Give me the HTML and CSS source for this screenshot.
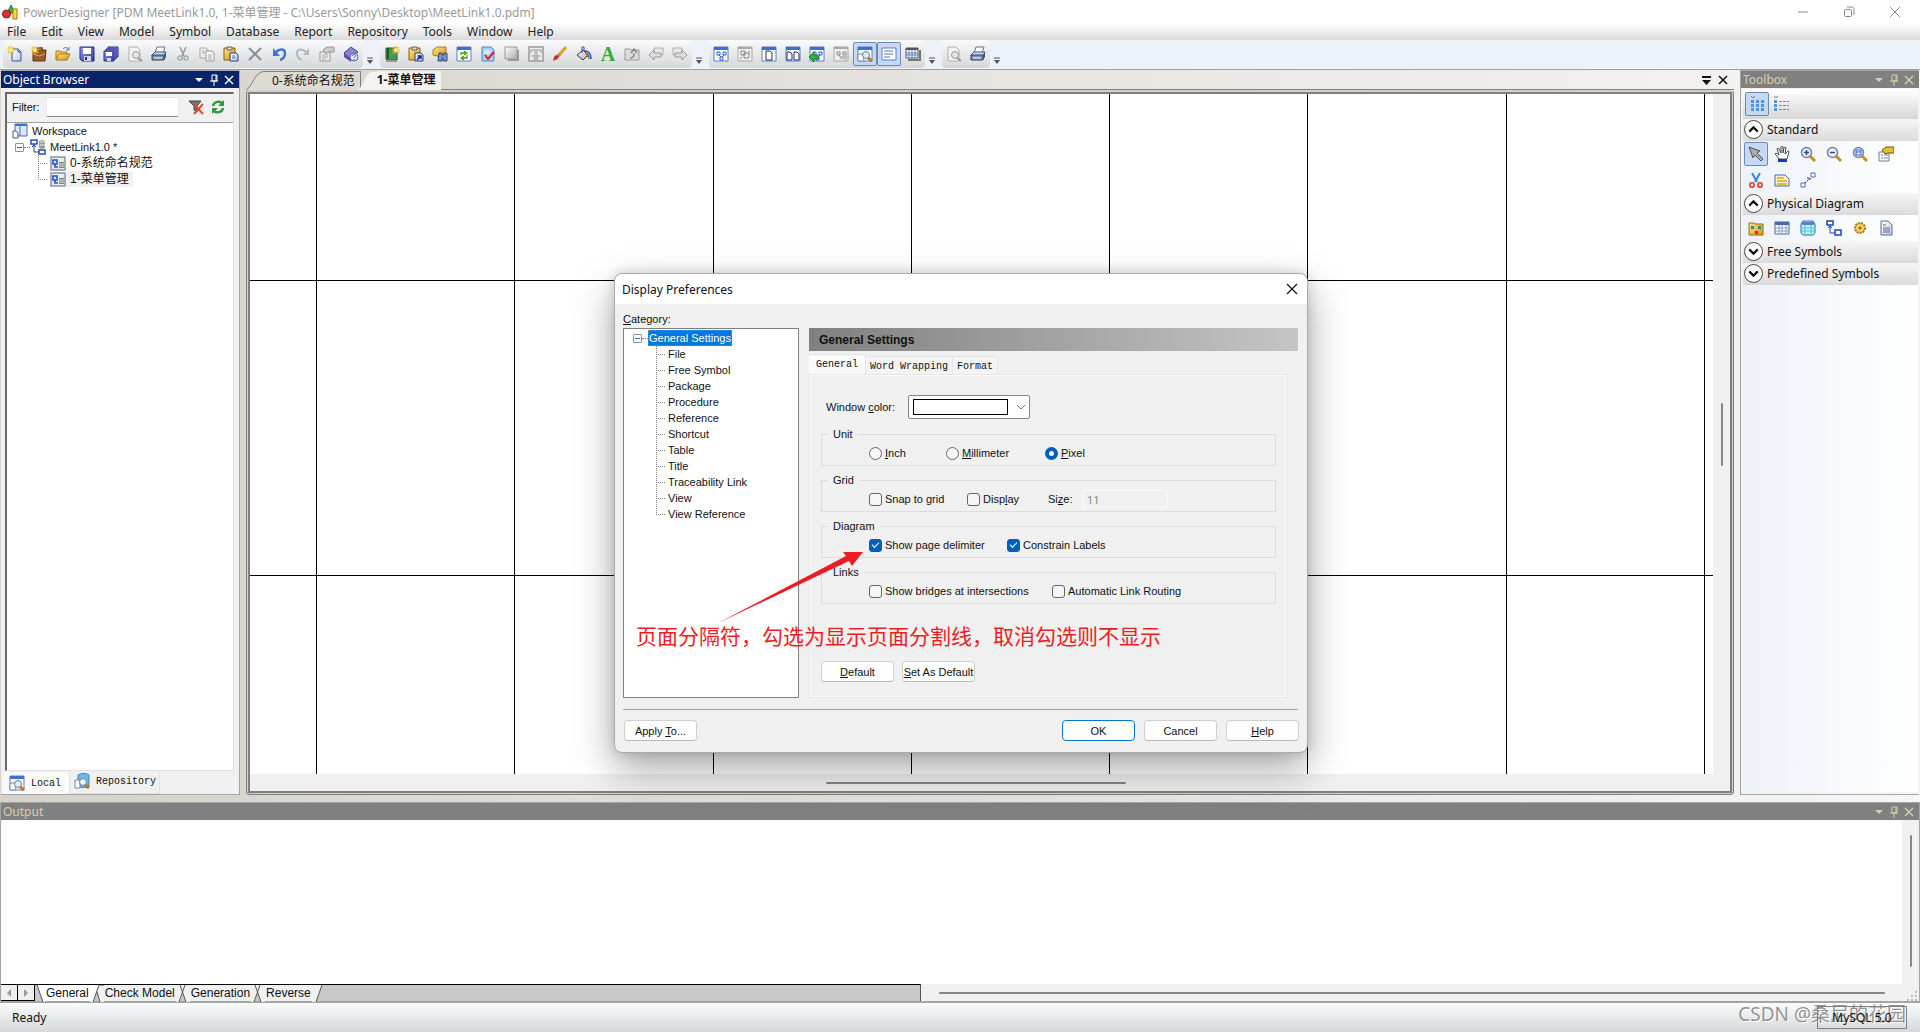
FILE: index.html
```html
<!DOCTYPE html>
<html lang="zh">
<head>
    <meta charset="utf-8">
    <meta name="viewport" content="width=device-width, initial-scale=1.0">
    <title>PowerDesigner</title>
    <link rel="stylesheet" href="styles.css">
</head>
<body>

<!-- icon sprite -->
<svg class="sprite" aria-hidden="true">
    <defs>
        <linearGradient id="g-page" x1="0" y1="0" x2="1" y2="1"><stop offset="0" stop-color="#fff"/><stop offset="1" stop-color="#b9cdec"/></linearGradient>
        <linearGradient id="g-gray" x1="0" y1="0" x2="1" y2="1"><stop offset="0" stop-color="#fff"/><stop offset="1" stop-color="#aaa"/></linearGradient>
        <linearGradient id="g-gold" x1="0" y1="0" x2="1" y2="1"><stop offset="0" stop-color="#ffe88a"/><stop offset="1" stop-color="#d8920c"/></linearGradient>
        <linearGradient id="g-blue" x1="0" y1="0" x2="1" y2="1"><stop offset="0" stop-color="#9a9df0"/><stop offset="1" stop-color="#3034a0"/></linearGradient>
    </defs>
    <symbol id="logo" viewBox="0 0 16 16"><path d="M9 1l4 8H5z" fill="#35b045" stroke="#1c7a2b"/><circle cx="4.500" cy="10" r="4" fill="#e03131" stroke="#8d1515"/><rect x="11" y="5" width="4" height="10" fill="#ffd84a" stroke="#a37800"/></symbol>
    <symbol id="spark" viewBox="0 0 16 16"><path d="M4 0v8M0 4h8M1 1l6 6M7 1L1 7" stroke="#f0c020" stroke-width="1.200"/><circle cx="4" cy="4" r="1.800" fill="#fff3a0"/></symbol>
    <symbol id="new" viewBox="0 0 16 16"><path d="M5 3h6l3 3v9H5z" fill="url(#g-page)" stroke="#3c5686"/><path d="M11 3v3h3" fill="none" stroke="#3c5686"/><use href="#spark" width="16" height="16"/></symbol>
    <symbol id="case" viewBox="0 0 16 16"><path d="M6 4V2h5v2" fill="none" stroke="#6b3a17" stroke-width="1.500"/><path d="M2 4h13l-1 11H2z" fill="#9a5a2a" stroke="#5d3011"/><path d="M2 8l6 2 6-2" fill="none" stroke="#d6a070"/><use href="#spark" width="16" height="16"/></symbol>
    <symbol id="open" viewBox="0 0 16 16"><path d="M1 14V5h4l1 1h6v3" fill="#f6c84c" stroke="#a87910"/><path d="M1 14l3-6h11l-3 6z" fill="url(#g-gold)" stroke="#a87910"/><path d="M8 3c2-2 4-2 5 0m1-2v3h-3" fill="none" stroke="#4b6ea8"/></symbol>
    <symbol id="save" viewBox="0 0 16 16"><path d="M1 1h14v14H3l-2-2z" fill="url(#g-blue)" stroke="#292c87"/><path d="M4 2h8v6H4z" fill="#fff"/><path d="M5 10h7v5H5z" fill="#d6d9ee"/><path d="M6 11h2v3H6z" fill="#292c87"/></symbol>
    <symbol id="saveall" viewBox="0 0 16 16"><path d="M5 1h10v10H5z" fill="#8386dd" stroke="#292c87"/><path d="M3 3h10v10H3z" fill="#8386dd" stroke="#292c87"/><path d="M1 5h10v10H1z" fill="url(#g-blue)" stroke="#292c87"/><path d="M3 6h6v4H3z" fill="#fff"/><path d="M4 12h4v3H4z" fill="#d6d9ee"/></symbol>
    <symbol id="preview" viewBox="0 0 16 16"><path d="M2 1h8l3 3v11H2z" fill="#f3f3f3" stroke="#b0b0b0"/><circle cx="9" cy="9" r="3.500" fill="#e4e4e4" stroke="#999"/><path d="M11 12l4 3" stroke="#999" stroke-width="2"/></symbol>
    <symbol id="print" viewBox="0 0 16 16"><path d="M6 1h8l-2 6H4z" fill="#fff" stroke="#5c6f94"/><path d="M1 9l3-3h11l-2 4H1z" fill="#cdd7ea" stroke="#43567c"/><path d="M1 9h12v5H1z" fill="#7c90b5" stroke="#2f4066"/><path d="M13 9l2-3v5l-2 3z" fill="#43567c"/><path d="M3 12h8" stroke="#fff"/></symbol>
    <symbol id="cut" viewBox="0 0 16 16"><path d="M5 1l4 9M11 1L7 10" stroke="#999" stroke-width="1.500"/><circle cx="5" cy="12" r="2" fill="none" stroke="#aaa" stroke-width="1.500"/><circle cx="11" cy="12" r="2" fill="none" stroke="#aaa" stroke-width="1.500"/></symbol>
    <symbol id="copy" viewBox="0 0 16 16"><path d="M1 2h6l2 2v8H1z" fill="#eee" stroke="#aaa"/><path d="M7 5h6l2 2v8H7z" fill="#f5f5f5" stroke="#999"/><path d="M3 5h3M3 7h3M9 9h4M9 11h4M9 13h4" stroke="#aaa"/></symbol>
    <symbol id="paste" viewBox="0 0 16 16"><path d="M1 2h11v12H1z" fill="url(#g-gold)" stroke="#8b5c0c"/><path d="M4 1h5v3H4z" fill="#ddd" stroke="#666"/><path d="M7 7h6l2 2v6H7z" fill="url(#g-page)" stroke="#2b3f75"/><path d="M9 10h3M9 12h4" stroke="#5874b4"/></symbol>
    <symbol id="delete" viewBox="0 0 16 16"><path d="M2 2l12 12M14 2L2 14" stroke="#8e8e8e" stroke-width="2"/></symbol>
    <symbol id="undo" viewBox="0 0 16 16"><path d="M5 6c4-4 9-3 9 1 0 3-2 6-5 7" fill="none" stroke="#3e75cf" stroke-width="2.500"/><path d="M2 2v8h7z" fill="#3e75cf"/></symbol>
    <symbol id="redo" viewBox="0 0 16 16"><path d="M11 6C7 2 2 3 2 7c0 3 2 6 5 7" fill="none" stroke="#b8b8b8" stroke-width="2"/><path d="M14 2v7H8z" fill="#b8b8b8"/></symbol>
    <symbol id="props" viewBox="0 0 16 16"><path d="M1 6h10v9H1z" fill="#eee" stroke="#999"/><path d="M3 9h6M3 11h6M3 13h4" stroke="#aaa"/><path d="M4 4l4-3h7v5H9L7 8z" fill="#ccc" stroke="#999"/></symbol>
    <symbol id="book" viewBox="0 0 16 16"><path d="M2 2h11v12H3l-1-1z" fill="#4e9a51" stroke="#1e5a28"/><path d="M4 2v11" stroke="#1e5a28" stroke-width="2"/><path d="M2 15h11" stroke="#999" stroke-width="2"/><use href="#spark" x="8" y="0" width="16" height="16"/></symbol>
    <symbol id="pastelink" viewBox="0 0 16 16"><use href="#paste" width="16" height="16"/><path d="M9 14l4-4M10 10h3v3" stroke="#1525a0" stroke-width="1.500" fill="none"/></symbol>
    <symbol id="find" viewBox="0 0 16 16"><path d="M1 4l4-3h9v5l-5 5-8-2z" fill="url(#g-gold)" stroke="#ad7910"/><path d="M7 7h3v2h2V7h3v8h-4v-3h-1v3H6z" fill="#7c94ca" stroke="#33457e"/></symbol>
    <symbol id="win" viewBox="0 0 16 16"><path d="M1 1h14v14H1z" fill="#fff" stroke="#5a7fc8"/><path d="M1 1h14v3H1z" fill="#3e6fd0"/></symbol>
    <symbol id="refreshwin" viewBox="0 0 16 16"><use href="#win" width="16" height="16"/><path d="M5 9V7h5M8 5l3 2-3 2M11 9v3H6M8 10l-3 2 3 2" stroke="#4f9b19" fill="none" stroke-width="1.300"/></symbol>
    <symbol id="check" viewBox="0 0 16 16"><path d="M2 1h9l3 3v11H2z" fill="#a9d0f5" stroke="#4d82c4"/><path d="M4 5h6M4 7h6" stroke="#fff"/><path d="M5 9l3 4 6-7" fill="none" stroke="#cb2430" stroke-width="2"/></symbol>
    <symbol id="shadow" viewBox="0 0 16 16"><path d="M4 4h11v11H4z" fill="#999"/><path d="M1 1h12v12H1z" fill="url(#g-gray)" stroke="#999"/></symbol>
    <symbol id="textbox" viewBox="0 0 16 16"><path d="M1 1h14v14H1z" fill="#eee" stroke="#999" stroke-width="1.500"/><path d="M3 4h10v3M3 4v3M7 4v9M9 4v9M5 13h6M3 10h10" stroke="#999" fill="none"/></symbol>
    <symbol id="brush" viewBox="0 0 16 16"><path d="M14 1L7 9" stroke="#e2a322" stroke-width="3"/><path d="M8 8L5 11" stroke="#8c929b" stroke-width="3"/><path d="M7 10c-1 4-4 4-6 5 1-2 0-4 3-6z" fill="#cc331b"/></symbol>
    <symbol id="bucket" viewBox="0 0 16 16"><path d="M1 9l6-5 5 5-5 5z" fill="url(#g-gray)" stroke="#333"/><path d="M6 7V1h2v4" fill="none" stroke="#555"/><path d="M8 5c5 0 7 2 7 8" stroke="#1848e0" stroke-width="1.500" fill="none"/><path d="M9 7c3 0 4 2 4 6" stroke="#2ca83c" stroke-width="1.500" fill="none"/><path d="M10 8c1 0 2 1 2 3" stroke="#e03030" stroke-width="1.500" fill="none"/></symbol>
    <symbol id="upfolder" viewBox="0 0 16 16"><path d="M1 3h5l1 1h8v10H1z" fill="#ddd" stroke="#999"/><path d="M6 12c4 0 4-2 4-5M7 7l3-4 3 4" stroke="#888" fill="none" stroke-width="1.500"/></symbol>
    <symbol id="prev" viewBox="0 0 16 16"><path d="M6 2h9v7H6z" fill="#e8e8e8" stroke="#aaa"/><path d="M1 9l5-5v3h7v4H6v3z" fill="#ddd" stroke="#999"/></symbol>
    <symbol id="next" viewBox="0 0 16 16"><path d="M1 2h9v7H1z" fill="#e8e8e8" stroke="#aaa"/><path d="M15 9l-5-5v3H3v4h7v3z" fill="#ddd" stroke="#999"/></symbol>
    <symbol id="diagram" viewBox="0 0 16 16"><use href="#win" width="16" height="16"/><path d="M4 6h3v3H4zM10 6h3v3h-3zM7 11h3v3H7zM6 9l2 2M11 9l-2 2" fill="none" stroke="#3355c8"/></symbol>
    <symbol id="group" viewBox="0 0 16 16"><path d="M1 1h14v14H1z" fill="#eee" stroke="#aaa"/><path d="M1 2h14" stroke="#aaa" stroke-width="2"/><path d="M4 5h4v4H4zM7 7h5v5H7zM3 13l2-2M13 5l-2 2" fill="none" stroke="#888"/></symbol>
    <symbol id="page" viewBox="0 0 16 16"><use href="#win" width="16" height="16"/><path d="M5 5h4l2 2v7H5z" fill="#fff" stroke="#222f60"/></symbol>
    <symbol id="pages" viewBox="0 0 16 16"><use href="#win" width="16" height="16"/><path d="M2 6h3l2 2v6H2zM9 6h3l2 2v6H9z" fill="#fff" stroke="#222f60"/></symbol>
    <symbol id="godiagram" viewBox="0 0 16 16"><use href="#diagram" width="16" height="16"/><path d="M0 11l5-5v3h4v4H5v3z" fill="#35b23c" stroke="#187b22"/></symbol>
    <symbol id="nodiagram" viewBox="0 0 16 16"><path d="M1 1h14v14H1z" fill="#eee" stroke="#aaa"/><path d="M1 2h14" stroke="#aaa" stroke-width="2"/><path d="M4 6h3v3H4zM10 6h3v3h-3zM6 9l2 3" fill="none" stroke="#888"/><path d="M15 11l-4-4v3H7v3h4v3z" fill="#bbb"/></symbol>
    <symbol id="browse" viewBox="0 0 16 16"><use href="#win" width="16" height="16"/><path d="M1 8h5l1 7H1z" fill="#fff" stroke="#7788a8"/><circle cx="9" cy="9" r="3.500" fill="#d8edff" stroke="#6c7a90"/><path d="M11 12l4 3" stroke="#c9731c" stroke-width="3"/></symbol>
    <symbol id="output" viewBox="0 0 16 16"><path d="M1 2h14v12H1z" fill="#fff" stroke="#5a7fc8"/><path d="M3 5h9M3 8h9M3 11h6" stroke="#5874b4"/></symbol>
    <symbol id="table" viewBox="0 0 16 16"><path d="M1 2h14v12H1z" fill="#fff" stroke="#53668f"/><path d="M1 2h14v3H1z" fill="#4569b4"/><path d="M1 8h14M1 11h14M5 5v9M8 5v9M12 5v9" stroke="#8299cc"/></symbol>
    <symbol id="resultlist" viewBox="0 0 16 16"><path d="M1 2h12v10H1z" fill="#fff" stroke="#555"/><path d="M1 2h12v2H1z" fill="#555"/><path d="M1 7h12M1 9h12M4 4v8M7 4v8M10 4v8" stroke="#5a7fc8"/><path d="M3 14h12V4" stroke="#777" stroke-width="2" fill="none"/></symbol>
    <symbol id="unfilter" viewBox="0 0 16 16"><path d="M1 2h12L9 7v6l-3-2V7z" fill="#777" stroke="#444"/><path d="M6 5l9 10M15 5L6 15" stroke="#e2482d" stroke-width="2"/></symbol>
    <symbol id="refresh" viewBox="0 0 16 16"><path d="M3 7c1-5 7-5 9-3M13 9c-1 5-7 5-9 3" fill="none" stroke="#319b3c" stroke-width="2.500"/><path d="M14 1v6H8zM2 15V9h6z" fill="#319b3c"/></symbol>
    <symbol id="workspace" viewBox="0 0 16 16"><path d="M3 1h12v12H3z" fill="#dce9fb" stroke="#3e6fd0"/><path d="M3 1h12v2H3z" fill="#3e6fd0"/><path d="M8 3v10" stroke="#3e6fd0"/><path d="M1 8h3l2 2v5H1z" fill="#fff" stroke="#445a85"/></symbol>
    <symbol id="model" viewBox="0 0 16 16"><path d="M1 1h6v4H1zM9 11h6v4H9z" fill="#fff" stroke="#1e4ed0" stroke-width="1.500"/><path d="M4 5v8h5M2 8l2-2 2 2" fill="none" stroke="#2143a0"/><path d="M9 2c1-1 5-1 6 0v7c-1 1-5 1-6 0z" fill="#999"/><path d="M10 3h5M10 6h5" stroke="#eee"/></symbol>
    <symbol id="physdiag" viewBox="0 0 16 16"><path d="M1 2h14v13H1z" fill="#e8eaf0" stroke="#8894a8" stroke-width="1.500"/><path d="M3 5h4v4H3zM5 9v3h3" fill="none" stroke="#1e4ed0" stroke-width="1.500"/><path d="M9 7h5v6H9z" fill="#888"/><path d="M9 9h5M9 11h5" stroke="#ddd"/></symbol>
    <symbol id="repo" viewBox="0 0 16 16"><path d="M4 2c3-2 8-2 11 0v11c-3 2-8 2-11 0z" fill="#6fb7e8" stroke="#3f82b8"/><path d="M1 7h5v8H1z" fill="#fff" stroke="#7788a8"/><circle cx="9" cy="9" r="3.500" fill="#e8f5ff" stroke="#6c7a90"/><path d="M11 12l4 3" stroke="#c9731c" stroke-width="3"/></symbol>
    <symbol id="chevdown" viewBox="0 0 16 16"><path d="M4 6l4 4 4-4" fill="none" stroke="currentColor" stroke-width="2"/></symbol>
    <symbol id="chevup" viewBox="0 0 16 16"><path d="M4 10l4-4 4 4" fill="none" stroke="currentColor" stroke-width="2"/></symbol>
    <symbol id="overflow" viewBox="0 0 8 8"><path d="M1 1h6" stroke="#555"/><path d="M1 3h6L4 7z" fill="#555"/></symbol>
    <symbol id="tri" viewBox="0 0 12 12"><path d="M2 4h8L6 8z" fill="currentColor"/></symbol>
    <symbol id="pin" viewBox="0 0 12 12"><path d="M4 1h5v6H4zM2 7h8M6 7v5M8 1v6" fill="none" stroke="currentColor"/></symbol>
    <symbol id="x" viewBox="0 0 12 12"><path d="M2 2l8 8M10 2l-8 8" stroke="currentColor" stroke-width="1.400"/></symbol>
    <symbol id="gridview" viewBox="0 0 16 16"><path d="M2 4h3v3H2zM7 4h3v3H7zM12 4h3v3h-3zM2 8h3v3H2zM7 8h3v3H7zM12 8h3v3h-3zM2 12h3v3H2zM7 12h3v3H7zM12 12h3v3h-3z" fill="#5593d8"/><path d="M2 0l2 2 2-2" fill="none" stroke="#777"/></symbol>
    <symbol id="listview" viewBox="0 0 16 16"><path d="M1 4h3v3H1zM1 8h3v3H1zM1 12h3v3H1z" fill="#5593d8"/><path d="M6 5.500h10M6 9.500h10M6 13.500h10" stroke="#888" stroke-dasharray="3 1"/><path d="M1 0l2 2 2-2" fill="none" stroke="#777"/></symbol>
    <symbol id="pointer" viewBox="0 0 16 16"><path d="M1 1l11 4-3 2 6 6-2 2-6-6-2 3z" fill="#aaa" stroke="#555"/></symbol>
    <symbol id="hand" viewBox="0 0 16 16"><path d="M5 13C4 11 2 9 1 8c0-1 2-1 4 1L3 3c0-1 2-1 2 0l2 4V1c0-1 2-1 2 0v6l1-5c0-1 2-1 2 0l-1 6 3-3c1 0 1 1 1 1l-2 7z" fill="#fff" stroke="#333" stroke-width="0.900"/><path d="M4 13h9v3H4z" fill="#1435d0"/></symbol>
    <symbol id="lens" viewBox="0 0 16 16"><path d="M10 10l5 5" stroke="#c98e1c" stroke-width="3"/><circle cx="6.500" cy="6.500" r="5" fill="#e9f2fd" stroke="#75849a" stroke-width="1.500"/></symbol>
    <symbol id="zoomin" viewBox="0 0 16 16"><use href="#lens" width="16" height="16"/><path d="M4 6.500h5M6.500 4v5" stroke="#2f4b8f" stroke-width="1.500"/></symbol>
    <symbol id="zoomout" viewBox="0 0 16 16"><use href="#lens" width="16" height="16"/><path d="M4 6.500h5" stroke="#2f4b8f" stroke-width="1.500"/></symbol>
    <symbol id="zoomfit" viewBox="0 0 16 16"><use href="#lens" width="16" height="16"/><path d="M4 4h5v5H4zM4 6h5" stroke="#2b58d8" fill="#fff"/></symbol>
    <symbol id="goldprops" viewBox="0 0 16 16"><path d="M1 6h10v9H1z" fill="#fff" stroke="#667a9c"/><path d="M3 9h2M6 9h4M3 12h2M6 12h4" stroke="#667a9c"/><path d="M4 4l4-3h8v6H10L7 8z" fill="#e8bd38" stroke="#6d5510"/></symbol>
    <symbol id="scissors" viewBox="0 0 16 16"><path d="M4 1l5 9M12 1L7 10" stroke="#2f8fd8" stroke-width="2"/><circle cx="4" cy="13" r="2.200" fill="none" stroke="#e03322" stroke-width="1.500"/><circle cx="12" cy="13" r="2.200" fill="none" stroke="#e03322" stroke-width="1.500"/></symbol>
    <symbol id="note" viewBox="0 0 16 16"><path d="M1 3h10l4 4v7H1z" fill="#fff5cc" stroke="#4a62b0"/><path d="M3 6h7M3 9h10M3 12h10" stroke="#d9a514" stroke-width="1.500"/></symbol>
    <symbol id="link" viewBox="0 0 16 16"><path d="M1 11h4v4H1zM11 1h4v4h-4z" fill="#fff" stroke="#4468c8"/><path d="M5 11l5-5M7 6h3v3" fill="none" stroke="#333" stroke-dasharray="2 1"/></symbol>
    <symbol id="package" viewBox="0 0 16 16"><path d="M1 3h5l1 1h8v11H1z" fill="url(#g-gold)" stroke="#8b6a1c"/><path d="M3 6h3v3H3zM10 6h3v3h-3z" fill="#2a8d84"/><path d="M7 11h3v3H7z" fill="#d02f21"/></symbol>
    <symbol id="view" viewBox="0 0 16 16"><path d="M3 1h10l2 3v9l-2 2H3l-2-2V4z" fill="#bdf6fa" stroke="#3b67ae"/><path d="M2 2h12v3H2z" fill="#4d86cf"/><path d="M1 8h14M1 11h14M5 5v10M11 5v10" stroke="#48c5d8"/></symbol>
    <symbol id="reference" viewBox="0 0 16 16"><path d="M1 1h6v4H1zM9 10h6v5H9z" fill="#fff" stroke="#1b43b8" stroke-width="1.500"/><path d="M4 5v8h5M2 8l2-2 2 2" fill="none" stroke="#1b43b8"/></symbol>
    <symbol id="gear" viewBox="0 0 16 16"><circle cx="8" cy="8" r="5" fill="#f2c14a" stroke="#b07c18" stroke-width="2" stroke-dasharray="2 1"/><circle cx="8" cy="8" r="3.500" fill="#f8d678"/><path d="M8 6v4M6 8h4" stroke="#8b5a0a"/></symbol>
    <symbol id="file" viewBox="0 0 16 16"><path d="M3 1h7l4 4v10H3z" fill="url(#g-page)" stroke="#566a90"/><path d="M5 5h3M5 8h7M5 10h7M5 12h7" stroke="#667"/></symbol>
</svg>

<header class="titlebar">
    <svg class="icon"><use href="#logo"/></svg>
    <span class="app-title">PowerDesigner [PDM MeetLink1.0, 1-菜单管理 - C:\Users\Sonny\Desktop\MeetLink1.0.pdm]</span>
    <div class="window-buttons">
        <button aria-label="Minimize"><svg viewBox="0 0 12 12"><path d="M1 6h10" stroke="#888"/></svg></button>
        <button aria-label="Restore"><svg viewBox="0 0 12 12"><rect x="1.500" y="3.500" width="7" height="7" rx="1" fill="none" stroke="#888"/><path d="M4 1h5c1 0 2 1 2 2v6" fill="none" stroke="#888"/></svg></button>
        <button aria-label="Close"><svg viewBox="0 0 12 12"><path d="M1 1l10 10M11 1L1 11" stroke="#888"/></svg></button>
    </div>
</header>

<nav class="menubar">
    <a href="#">File</a><a href="#">Edit</a><a href="#">View</a><a href="#">Model</a><a href="#">Symbol</a><a href="#">Database</a><a href="#">Report</a><a href="#">Repository</a><a href="#">Tools</a><a href="#">Window</a><a href="#">Help</a>
</nav>

<div class="toolbar">
    <div class="tool-group">
        <button aria-label="New"><svg class="icon"><use href="#new"/></svg></button>
        <button aria-label="New Project"><svg class="icon"><use href="#case"/></svg></button>
        <button aria-label="Open"><svg class="icon"><use href="#open"/></svg></button>
        <button aria-label="Save"><svg class="icon"><use href="#save"/></svg></button>
        <button aria-label="Save All"><svg class="icon"><use href="#saveall"/></svg></button>
        <button aria-label="Print Preview"><svg class="icon"><use href="#preview"/></svg></button>
        <button aria-label="Print"><svg class="icon"><use href="#print"/></svg></button>
        <button aria-label="Cut"><svg class="icon"><use href="#cut"/></svg></button>
        <button aria-label="Copy"><svg class="icon"><use href="#copy"/></svg></button>
        <button aria-label="Paste"><svg class="icon"><use href="#paste"/></svg></button>
        <button aria-label="Delete"><svg class="icon"><use href="#delete"/></svg></button>
        <button aria-label="Undo"><svg class="icon"><use href="#undo"/></svg></button>
        <button aria-label="Redo"><svg class="icon"><use href="#redo"/></svg></button>
        <button aria-label="Properties"><svg class="icon"><use href="#props"/></svg></button>
        <button aria-label="Help"><svg class="icon" viewBox="0 0 16 16"><path d="M1 7l7-6 7 5-7 7z" fill="#8d82d0" stroke="#4a3f94"/><path d="M1 7v4l7 5v-3z" fill="#5b4fa8"/><circle cx="11" cy="11" r="4" fill="#e8ecff" stroke="#4a68b0"/><path d="M9.500 10c0-2 3-2 3 0 0 1-1.500 1-1.500 2M11 13v1" fill="none" stroke="#3047a0"/></svg></button>
    </div>
    <svg class="overflow"><use href="#overflow"/></svg>
    <div class="tool-group">
        <button aria-label="New Report"><svg class="icon"><use href="#book"/></svg></button>
        <button aria-label="Paste As Shortcut"><svg class="icon"><use href="#pastelink"/></svg></button>
        <button aria-label="Find Objects"><svg class="icon"><use href="#find"/></svg></button>
        <button aria-label="Refresh"><svg class="icon"><use href="#refreshwin"/></svg></button>
        <button aria-label="Check Model"><svg class="icon"><use href="#check"/></svg></button>
        <button aria-label="Shadow"><svg class="icon"><use href="#shadow"/></svg></button>
        <button aria-label="Adjust To Text"><svg class="icon"><use href="#textbox"/></svg></button>
        <button aria-label="Line Style"><svg class="icon"><use href="#brush"/></svg></button>
        <button aria-label="Fill"><svg class="icon"><use href="#bucket"/></svg></button>
        <button class="font-button" aria-label="Font">A</button>
        <button aria-label="Up One Level"><svg class="icon"><use href="#upfolder"/></svg></button>
        <button aria-label="Previous"><svg class="icon"><use href="#prev"/></svg></button>
        <button aria-label="Next"><svg class="icon"><use href="#next"/></svg></button>
    </div>
    <svg class="overflow"><use href="#overflow"/></svg>
    <div class="tool-group">
        <button aria-label="Diagram"><svg class="icon"><use href="#diagram"/></svg></button>
        <button aria-label="Selection"><svg class="icon"><use href="#group"/></svg></button>
        <button aria-label="Page"><svg class="icon"><use href="#page"/></svg></button>
        <button aria-label="Pages"><svg class="icon"><use href="#pages"/></svg></button>
        <button aria-label="Previous View"><svg class="icon"><use href="#godiagram"/></svg></button>
        <button aria-label="Next View"><svg class="icon"><use href="#nodiagram"/></svg></button>
        <button class="pressed" aria-label="Browser"><svg class="icon"><use href="#browse"/></svg></button>
        <button class="pressed" aria-label="Output"><svg class="icon"><use href="#output"/></svg></button>
        <button aria-label="Result List"><svg class="icon"><use href="#resultlist"/></svg></button>
    </div>
    <svg class="overflow"><use href="#overflow"/></svg>
    <div class="tool-group">
        <button aria-label="Preview"><svg class="icon"><use href="#preview"/></svg></button>
        <button aria-label="Print"><svg class="icon"><use href="#print"/></svg></button>
    </div>
    <svg class="overflow"><use href="#overflow"/></svg>
</div>

<main class="workarea">
    <section class="browser">
        <div class="panel-title active">
            <h2>Object Browser</h2>
            <button aria-label="Menu"><svg><use href="#tri"/></svg></button>
            <button aria-label="Pin"><svg><use href="#pin"/></svg></button>
            <button aria-label="Close"><svg><use href="#x"/></svg></button>
        </div>
        <div class="browser-box">
            <div class="filter">
                <label for="filter">Filter:</label>
                <input type="text" id="filter">
                <button aria-label="Clear filter"><svg class="icon"><use href="#unfilter"/></svg></button>
                <button aria-label="Refresh"><svg class="icon"><use href="#refresh"/></svg></button>
            </div>
            <ul class="object-tree">
                <li class="level0"><svg class="icon"><use href="#workspace"/></svg><span>Workspace</span></li>
                <li class="level1"><i class="expander"></i><i class="dots"></i><svg class="icon"><use href="#model"/></svg><span>MeetLink1.0 *</span></li>
                <li class="level2"><i class="branch"></i><svg class="icon"><use href="#physdiag"/></svg><span>0-系统命名规范</span></li>
                <li class="level2"><i class="branch last"></i><svg class="icon"><use href="#physdiag"/></svg><span class="current">1-菜单管理</span></li>
            </ul>
        </div>
        <div class="browser-tabs">
            <button class="on"><svg class="icon"><use href="#browse"/></svg>Local</button>
            <button><svg class="icon"><use href="#repo"/></svg>Repository</button>
        </div>
    </section>

    <section class="mdi">
        <div class="mdi-tabs">
            <svg class="slope" viewBox="0 0 20 20"><path d="M0 20C6 18 8 2 18 1.500h2V20z" fill="#dedbd3"/><path d="M0 20C6 18 8 2 18 1.500h2" fill="none" stroke="#808080"/></svg>
            <button class="mdi-tab">0-系统命名规范</button>
            <svg class="slope second" viewBox="0 0 20 20"><path d="M0 20C7 18 7 2 16 2h4v18z" fill="#f4f3f0"/></svg>
            <button class="mdi-tab on">1-菜单管理</button>
            <div class="strip-rest">
                <button aria-label="Windows"><svg viewBox="0 0 12 12"><path d="M2 2h9v2H2zM2 6h9L6.500 11z" fill="#111"/></svg></button>
                <button aria-label="Close"><svg viewBox="0 0 12 12"><path d="M2 2l8 8M10 2l-8 8" stroke="#111" stroke-width="1.500"/></svg></button>
            </div>
        </div>
        <div class="frame">
            <div class="frame-inner">
                <div class="canvas">
                    <div></div><div></div><div></div><div></div><div></div><div></div><div></div><div></div><div></div>
                    <div></div><div></div><div></div><div></div><div></div><div></div><div></div><div></div><div></div>
                    <div></div><div></div><div></div><div></div><div></div><div></div><div></div><div></div><div></div>
                </div>
                <div class="vscroll"><i class="thumb canvas-v"></i></div>
                <div class="hscroll"><i class="thumb canvas-h"></i></div>
            </div>
        </div>
    </section>

    <aside class="toolbox">
        <div class="panel-title">
            <h2>Toolbox</h2>
            <button aria-label="Menu"><svg><use href="#tri"/></svg></button>
            <button aria-label="Pin"><svg><use href="#pin"/></svg></button>
            <button aria-label="Close"><svg><use href="#x"/></svg></button>
        </div>
        <div class="toolbox-body">
            <div class="view-modes">
                <button class="pressed" aria-label="Icons"><svg class="icon"><use href="#gridview"/></svg></button>
                <button aria-label="List"><svg class="icon"><use href="#listview"/></svg></button>
            </div>
            <h3><svg class="round"><use href="#chevup"/></svg>Standard</h3>
            <div class="tools">
                <button class="pressed" aria-label="Pointer"><svg class="icon"><use href="#pointer"/></svg></button>
                <button aria-label="Grabber"><svg class="icon"><use href="#hand"/></svg></button>
                <button aria-label="Zoom In"><svg class="icon"><use href="#zoomin"/></svg></button>
                <button aria-label="Zoom Out"><svg class="icon"><use href="#zoomout"/></svg></button>
                <button aria-label="Fit"><svg class="icon"><use href="#zoomfit"/></svg></button>
                <button aria-label="Properties"><svg class="icon"><use href="#goldprops"/></svg></button>
                <button aria-label="Delete"><svg class="icon"><use href="#scissors"/></svg></button>
                <button aria-label="Note"><svg class="icon"><use href="#note"/></svg></button>
                <button aria-label="Link"><svg class="icon"><use href="#link"/></svg></button>
            </div>
            <h3><svg class="round"><use href="#chevup"/></svg>Physical Diagram</h3>
            <div class="tools">
                <button aria-label="Package"><svg class="icon"><use href="#package"/></svg></button>
                <button aria-label="Table"><svg class="icon"><use href="#table"/></svg></button>
                <button aria-label="View"><svg class="icon"><use href="#view"/></svg></button>
                <button aria-label="Reference"><svg class="icon"><use href="#reference"/></svg></button>
                <button aria-label="Procedure"><svg class="icon"><use href="#gear"/></svg></button>
                <button aria-label="File"><svg class="icon"><use href="#file"/></svg></button>
            </div>
            <h3><svg class="round"><use href="#chevdown"/></svg>Free Symbols</h3>
            <h3><svg class="round"><use href="#chevdown"/></svg>Predefined Symbols</h3>
        </div>
    </aside>
</main>

<section class="output">
    <div class="panel-title">
        <h2>Output</h2>
        <button aria-label="Menu"><svg><use href="#tri"/></svg></button>
        <button aria-label="Pin"><svg><use href="#pin"/></svg></button>
        <button aria-label="Close"><svg><use href="#x"/></svg></button>
    </div>
    <div class="output-body">
        <div class="output-text"></div>
        <div class="vscroll"><i class="thumb output-v"></i></div>
    </div>
    <div class="output-foot">
        <div class="output-tabs">
            <button class="step" aria-label="Previous tab"><svg viewBox="0 0 12 12"><path d="M8 2v8L4 6z" fill="#999"/></svg></button>
            <button class="step" aria-label="Next tab"><svg viewBox="0 0 12 12"><path d="M4 2v8l4-4z" fill="#999"/></svg></button>
            <svg class="edge" viewBox="0 0 10 17"><path d="M2 0l6 17h2V0z" fill="#fff"/><path d="M2 0l6 17" stroke="#555"/></svg>
            <button class="on">General</button>
            <svg class="edge wide" viewBox="0 0 14 17"><path d="M0 0h9L3 17H0z" fill="#fff"/><path d="M9 0h5v17h-4L7 7z" fill="#f0f0f0"/><path d="M3 17L9 0h5M7 7l3 10" fill="none" stroke="#555"/></svg>
            <button>Check Model</button>
            <svg class="edge wide" viewBox="0 0 14 17"><path d="M0 0h14v17h-4L7 8 3 17H0z" fill="#f0f0f0"/><path d="M3 17L9 0M4 0l6 17" fill="none" stroke="#555"/></svg>
            <button>Generation</button>
            <svg class="edge wide" viewBox="0 0 14 17"><path d="M0 0h14v17h-4L7 8 3 17H0z" fill="#f0f0f0"/><path d="M3 17L9 0M4 0l6 17" fill="none" stroke="#555"/></svg>
            <button>Reverse</button>
            <svg class="edge wide" viewBox="0 0 14 17"><path d="M0 0h10L4 17H0z" fill="#f0f0f0"/><path d="M4 17l6-17" stroke="#555"/></svg>
        </div>
        <div class="output-scroll"><i class="thumb output-h"></i></div>
        <svg class="grip" viewBox="0 0 10 10"><path d="M8 0h2v2H8zM4 4h2v2H4zM8 4h2v2H8zM0 8h2v2H0zM4 8h2v2H4zM8 8h2v2H8z" fill="#bbb"/></svg>
    </div>
</section>

<footer class="statusbar">
    <span>Ready</span>
    <span class="dbms">MySQL 5.0</span>
    <span class="watermark">CSDN @桑尼的花园</span>
</footer>

<div class="dialog" role="dialog" aria-labelledby="dialog-title">
    <div class="dialog-title">
        <h1 id="dialog-title">Display Preferences</h1>
        <button aria-label="Close"><svg viewBox="0 0 12 12"><path d="M1 1l10 10M11 1L1 11" stroke="#111" stroke-width="1.200"/></svg></button>
    </div>
    <div class="dialog-main">
        <div class="category">
            <p><u>C</u>ategory:</p>
            <ul>
                <li class="root"><i class="expander"></i><i class="dots"></i><span>General Settings</span></li>
                <li><i class="branch"></i>File</li>
                <li><i class="branch"></i>Free Symbol</li>
                <li><i class="branch"></i>Package</li>
                <li><i class="branch"></i>Procedure</li>
                <li><i class="branch"></i>Reference</li>
                <li><i class="branch"></i>Shortcut</li>
                <li><i class="branch"></i>Table</li>
                <li><i class="branch"></i>Title</li>
                <li><i class="branch"></i>Traceability Link</li>
                <li><i class="branch"></i>View</li>
                <li><i class="branch last"></i>View Reference</li>
            </ul>
        </div>
        <div class="settings">
            <h2>General Settings</h2>
            <div class="settings-tabs">
                <button class="on">General</button>
                <button>Word Wrapping</button>
                <button>Format</button>
            </div>
            <form class="settings-panel">
                <div class="color-row">
                    <label for="window-color">Window <u>c</u>olor:</label>
                    <div class="color-select">
                        <select id="window-color"><option></option></select>
                        <span class="swatch"></span>
                        <svg viewBox="0 0 12 12"><path d="M2 4l4 4 4-4" fill="none" stroke="#777"/></svg>
                    </div>
                </div>
                <fieldset>
                    <legend>Unit</legend>
                    <div class="options unit">
                        <label><input type="radio" name="unit"><span><u>I</u>nch</span></label>
                        <label><input type="radio" name="unit"><span><u>M</u>illimeter</span></label>
                        <label><input type="radio" name="unit" checked><span><u>P</u>ixel</span></label>
                    </div>
                </fieldset>
                <fieldset>
                    <legend>Grid</legend>
                    <div class="options grid">
                        <label><input type="checkbox"><span>Snap to <u>g</u>rid</span></label>
                        <label><input type="checkbox"><span>Disp<u>l</u>ay</span></label>
                        <label for="grid-size"><span>Si<u>z</u>e:</span></label>
                        <input type="text" id="grid-size" value="11" disabled>
                    </div>
                </fieldset>
                <fieldset>
                    <legend>Diagram</legend>
                    <div class="options diagram">
                        <label><input type="checkbox" checked><span>Show page delimiter</span></label>
                        <label><input type="checkbox" checked><span>Constrain Labels</span></label>
                    </div>
                </fieldset>
                <fieldset>
                    <legend>Links</legend>
                    <div class="options links">
                        <label><input type="checkbox"><span>Show bridges at intersections</span></label>
                        <label><input type="checkbox"><span>Automatic Link Routing</span></label>
                    </div>
                </fieldset>
                <div class="default-row">
                    <button type="button" class="btn"><u>D</u>efault</button>
                    <button type="button" class="btn"><u>S</u>et As Default</button>
                </div>
            </form>
        </div>
    </div>
    <div class="dialog-foot">
        <button class="btn apply">Apply <u>T</u>o...</button>
        <button class="btn primary">OK</button>
        <button class="btn">Cancel</button>
        <button class="btn"><u>H</u>elp</button>
    </div>
    <svg class="arrow" viewBox="0 0 148 74"><path d="M1 72L129 5l-3-4 20 0-11 14-3-5z" fill="#ed1c24"/></svg>
    <p class="annotation">页面分隔符，勾选为显示页面分割线，取消勾选则不显示</p>
</div>

</body>
</html>
```
FILE: styles.css
```css
* {
    box-sizing: border-box;
}

body {
    margin: 0;
    height: 100vh;
    display: flex;
    flex-direction: column;
    overflow: hidden;
    font-family: "Noto Sans", "Noto Sans CJK SC", sans-serif;
    font-size: 12px;
    color: #111;
    background: #edf1f9;
}

h1, h2, h3, p, ul {
    margin: 0;
    padding: 0;
    font-weight: normal;
    font-size: 12px;
}

ul {
    list-style: none;
}

button {
    font: inherit;
    color: inherit;
    margin: 0;
    padding: 0;
    border: 0;
    background: none;
    white-space: nowrap;
}

svg {
    display: block;
    flex: none;
}

.sprite {
    position: absolute;
    width: 0;
    height: 0;
}

.icon {
    width: 16px;
    height: 16px;
}

/* title bar and menu */
.titlebar {
    display: flex;
    align-items: center;
    height: 24px;
    padding-left: 2px;
    gap: 5px;
    background: #fff;
    color: #999;
}

.window-buttons {
    margin-left: auto;
    margin-right: 19px;
    display: flex;
    gap: 34px;
}

.window-buttons svg {
    width: 12px;
    height: 12px;
}

.menubar {
    display: flex;
    align-items: center;
    gap: 15px;
    height: 16px;
    padding-left: 7px;
    background: linear-gradient(#fdfdfd, #dadada);
}

.menubar a {
    color: #222;
    text-decoration: none;
    line-height: 16px;
}

/* toolbars */
.toolbar {
    display: flex;
    height: 30px;
    padding: 0 3px;
    border-bottom: 1px solid #a0a0a0;
}

.tool-group {
    display: flex;
    align-items: center;
    height: 28px;
    border-radius: 4px;
    background: linear-gradient(#fafafb, #d5d7d9);
}

.tool-group button, .view-modes button, .tools button {
    display: flex;
    align-items: center;
    justify-content: center;
    width: 24px;
    height: 24px;
    border: 1px solid transparent;
}

.tool-group .pressed, .view-modes .pressed, .tools .pressed {
    border: 1px solid #6a8ab5;
    border-radius: 2px;
    background: #c5d9f5;
}

.tool-group .font-button {
    color: #35a93b;
    font: bold 20px "Liberation Serif", serif;
}

.overflow {
    width: 8px;
    height: 8px;
    margin: 17px 6px 0 3px;
}

/* docking area */
.workarea {
    flex: 1;
    min-height: 0;
    display: grid;
    grid-template-columns: 239px 1fr 179px;
    gap: 6px;
    padding: 0 1px 7px;
    background: linear-gradient(to right, #d6d2ca, #f5f5f5);
}

.panel-title {
    display: flex;
    align-items: center;
    gap: 3px;
    height: 17px;
    padding: 0 4px 0 2px;
    background: #808080;
    color: #d4d0a8;
}

.panel-title.active {
    background: #0a246a;
    color: #fff;
}

.panel-title h2 {
    margin-right: auto;
    line-height: 17px;
}

.panel-title svg {
    width: 12px;
    height: 12px;
}

.browser {
    display: flex;
    flex-direction: column;
    border: 1px solid #a5a5a5;
    border-left: 0;
    background: #f0f0f0;
}

.browser-box {
    flex: 1;
    display: flex;
    flex-direction: column;
    margin: 4px 5px 1px 4px;
    border: 1px solid #e3e3e3;
    border-top: 2px solid #696969;
    border-left: 2px solid #696969;
    background: #fff;
}

.filter {
    display: flex;
    align-items: center;
    gap: 6px;
    height: 29px;
    padding: 0 7px 2px 5px;
    background: #f0f0f0;
    border-bottom: 1px solid #a0a0a0;
    font-family: "Liberation Sans", sans-serif;
    font-size: 11px;
}

.filter input {
    flex: 1;
    min-width: 0;
    height: 20px;
    margin-right: 3px;
    border: 1px solid #e8e8e8;
    border-bottom-color: #868686;
    border-radius: 2px;
    background: #fff;
}

.object-tree {
    font-family: "Liberation Sans", "Noto Sans CJK SC", sans-serif;
    font-size: 11px;
}

.object-tree li {
    display: flex;
    align-items: center;
    height: 16px;
    line-height: 16px;
    white-space: nowrap;
}

.object-tree span {
    padding: 0 4px;
}

.object-tree .level0 {
    padding-left: 5px;
}

.object-tree .level1 {
    padding-left: 8px;
}

.object-tree .level2 {
    padding-left: 31px;
    font-size: 12px;
}

.object-tree .current {
    background: #f0f0f0;
}

.expander {
    width: 9px;
    height: 9px;
    border: 1px solid #919191;
    border-radius: 1px;
    background: linear-gradient(#3b6cb8, #3b6cb8) center / 5px 1px no-repeat #fff;
}

.dots {
    width: 6px;
    height: 1px;
    border-top: 1px dotted #808080;
}

/* dotted tree lines: a vertical and a stub to the item */
.branch {
    align-self: stretch;
    width: 12px;
    background:
        repeating-linear-gradient(#808080 0 1px, transparent 1px 2px) 0 0 / 1px 100% no-repeat,
        repeating-linear-gradient(to right, #808080 0 1px, transparent 1px 2px) 0 8px / 9px 1px no-repeat;
}

.branch.last {
    background-size: 1px 8px, 9px 1px;
}

.browser-tabs {
    display: flex;
    height: 22px;
    padding-left: 2px;
    font-family: "Liberation Mono", monospace;
    font-size: 10px;
}

.browser-tabs button {
    display: flex;
    align-items: center;
    gap: 6px;
    padding: 0 3px 3px 4px;
    border: 1px solid #e3e3e3;
    border-top: 0;
}

.browser-tabs .on {
    padding: 0 8px 0 6px;
    border: 0;
    background: #f9f9f9;
}

/* diagram windows */
.mdi {
    display: flex;
    flex-direction: column;
    min-width: 0;
}

.mdi-tabs {
    display: flex;
    height: 20px;
}

.slope {
    width: 20px;
    height: 20px;
}

.slope.second {
    margin-left: -4px;
}

.mdi-tab {
    height: 19px;
    margin-top: 1px;
    padding: 0 5px 2px 6px;
    border-top: 1px solid #808080;
    border-right: 1px solid #808080;
    background: #dedbd3;
    line-height: 15px;
}

.mdi-tab.on {
    padding: 0 6px 2px 0;
    border: 0;
    background: #f4f3f0;
    font-weight: bold;
}

.strip-rest {
    flex: 1;
    display: flex;
    justify-content: flex-end;
    align-items: center;
    gap: 5px;
    padding-right: 5px;
    border-bottom: 1px solid #808080;
}

.strip-rest svg {
    width: 12px;
    height: 12px;
}

.frame {
    flex: 1;
    display: flex;
    padding: 1px;
    border: 1px solid #808080;
    border-top-color: #d4d0c8;
    border-radius: 4px;
    background: #d4d0c8;
}

.frame-inner {
    flex: 1;
    display: grid;
    grid-template-columns: 1fr 17px;
    grid-template-rows: 1fr 17px;
    border: 2px solid #808080;
    background: #f0f0f0;
}

/* printed pages, one cell per page */
.canvas {
    display: grid;
    grid-template-columns: 67px repeat(7, 1fr) 8px;
    grid-template-rows: 187px 295px 1fr;
    background: #fff;
}

.canvas div {
    border-right: 1px solid #000;
    border-bottom: 1px solid #000;
}

.canvas div:nth-child(9n) {
    border-right: 0;
}

.canvas div:nth-child(n+19) {
    border-bottom: 0;
}

.vscroll {
    width: 17px;
    display: flex;
    justify-content: center;
    background: #f0f0f0;
}

.hscroll {
    display: flex;
    align-items: center;
    background: #f0f0f0;
}

.thumb {
    width: 2px;
    height: 2px;
    border-radius: 1px;
    background: #868686;
}

.canvas-v {
    height: 63px;
    margin-top: 309px;
}

.canvas-h {
    width: 300px;
    margin-left: 576px;
}

/* toolbox */
.toolbox {
    display: flex;
    flex-direction: column;
    border: 1px solid #a5a5a5;
    border-right: 0;
}

.toolbox-body {
    flex: 1;
    margin: 1px 1px 2px 2px;
    background: linear-gradient(to right, #edf2f8, #fff);
}

.view-modes {
    display: flex;
    align-items: center;
    height: 30px;
    padding-left: 2px;
    background: linear-gradient(#fff, #d6d6d6);
}

.toolbox h3 {
    display: flex;
    align-items: center;
    gap: 4px;
    height: 22px;
    padding-left: 1px;
    border-bottom: 1px solid #d8d8d8;
    background: linear-gradient(#f6f6f6, #dcdcdc);
    line-height: 20px;
}

.round {
    width: 19px;
    height: 19px;
    border: 1px solid #444;
    border-radius: 50%;
    background: #fff;
}

.tools {
    display: grid;
    grid-template-columns: repeat(6, 24px);
    gap: 2px;
    padding: 1px;
}

/* output */
.output {
    height: 201px;
    display: flex;
    flex-direction: column;
    border: 1px solid #a5a5a5;
    border-bottom: 2px solid #a5a5a5;
    background: #f0f0f0;
}

.output .panel-title {
    flex: none;
}

.output-body {
    flex: 1;
    display: flex;
}

.output-text {
    flex: 1;
    background: #fff;
}

.output-v {
    height: 132px;
    margin-top: 15px;
}

.output-foot {
    display: flex;
    height: 17px;
    padding-right: 2px;
}

.output-tabs {
    width: 48%;
    display: flex;
    border-top: 1px solid #000;
    border-right: 1px solid #555;
    background: #c8c8c8;
    font-family: "Liberation Sans", sans-serif;
    font-size: 12px;
}

.output-tabs button {
    padding: 0 1px;
    background: #f0f0f0;
    line-height: 16px;
}

.output-tabs .on {
    background: #fff;
}

.output-tabs .step {
    width: 17px;
    border-right: 1px solid #000;
    border-bottom: 1px solid #000;
}

.step svg {
    width: 12px;
    height: 12px;
    margin: auto;
}

.edge {
    width: 10px;
    height: 17px;
}

.edge.wide {
    width: 14px;
}

.output-scroll {
    flex: 1;
    display: flex;
    align-items: center;
    padding: 0 22px 0 18px;
}

.output-h {
    flex: 1;
}

.grip {
    align-self: flex-end;
    width: 10px;
    height: 10px;
}

.statusbar {
    position: relative;
    display: flex;
    align-items: center;
    justify-content: space-between;
    height: 29px;
    padding: 0 13px 0 12px;
    background: linear-gradient(#fafbfc, #d5d7d9);
}

.dbms {
    position: relative;
    z-index: 1;
    width: 90px;
    height: 23px;
    border: 1px solid #808080;
    text-align: center;
    line-height: 21px;
}

.watermark {
    position: absolute;
    right: 14px;
    top: 0;
    font-size: 19px;
    line-height: 22px;
    color: rgba(120, 120, 120, 0.8);
    text-shadow: 1px 1px #fff;
}

/* preferences dialog */
.dialog {
    position: absolute;
    top: 273px;
    left: 50%;
    width: 694px;
    margin-left: -346px;
    border: 1px solid #aaa;
    border-radius: 8px;
    background: #f0f0f0;
    box-shadow: 0 16px 40px rgba(0, 0, 0, 0.35), 0 0 12px rgba(0, 0, 0, 0.15);
    font-family: "Liberation Sans", sans-serif;
    font-size: 11px;
}

.dialog-title {
    display: flex;
    align-items: center;
    justify-content: space-between;
    height: 30px;
    padding: 0 9px 0 7px;
    border-radius: 8px 8px 0 0;
    background: #fff;
    font-family: "Noto Sans", sans-serif;
}

.dialog-title svg {
    width: 12px;
    height: 12px;
}

.dialog-main {
    display: grid;
    grid-template-columns: 176px 1fr;
    gap: 10px;
    margin: 0 9px 0 8px;
    padding: 7px 0 11px;
    border-bottom: 1px solid #a0a0a0;
}

.category {
    display: flex;
    flex-direction: column;
}

.category p {
    height: 17px;
    font-size: 11px;
    line-height: 16px;
}

.category ul {
    flex: 1;
    border: 1px solid #7a7f8c;
    background: #fff;
    padding-top: 1px;
    font-size: 11px;
}

.category li {
    display: flex;
    height: 16px;
    padding-left: 32px;
    line-height: 16px;
}

.category .root {
    align-items: center;
    padding-left: 9px;
}

.category .root span {
    padding: 0 1px;
    background: #0078d7;
    color: #fff;
    outline: 1px dotted #d07818;
    outline-offset: -1px;
}

.settings {
    display: flex;
    flex-direction: column;
    padding-top: 17px;
}

.settings h2 {
    height: 23px;
    padding-left: 10px;
    background: linear-gradient(to right, #808080, #c5c5c5);
    font-weight: bold;
    font-size: 12px;
    line-height: 24px;
}

.settings-tabs {
    display: flex;
    align-items: flex-end;
    height: 23px;
    font-family: "Liberation Mono", monospace;
    font-size: 10px;
}

.settings-tabs button {
    height: 18px;
    padding: 1px 4px 0;
    border: 1px solid #e3e3e3;
    border-bottom: 0;
    border-left: 0;
    background: #f3f3f3;
}

.settings-tabs .on {
    height: 20px;
    padding: 0 7px 1px;
    background: #fafafa;
}

.settings-panel {
    margin-right: 11px;
    padding: 19px 9px 14px 10px;
    border: 2px solid #fafafa;
    outline: 1px solid #e6e6e6;
    outline-offset: -1px;
}

.color-row {
    display: flex;
    align-items: center;
    gap: 15px;
    padding-left: 5px;
    margin-bottom: 8px;
}

.color-row label {
    width: 67px;
    white-space: nowrap;
}

/* the chosen colour is drawn over the closed list */
.color-select {
    position: relative;
    width: 122px;
    height: 24px;
}

.color-select select {
    appearance: none;
    display: block;
    width: 100%;
    height: 100%;
    border: 1px solid #868686;
    border-radius: 2px;
    background: #fff;
}

.swatch {
    position: absolute;
    inset: 4px 22px 4px 5px;
    border: 1px solid #000;
    background: #fff;
    pointer-events: none;
}

.color-select svg {
    position: absolute;
    right: 3px;
    top: 6px;
    width: 12px;
    height: 12px;
    pointer-events: none;
}

fieldset {
    margin: 0 0 7px;
    padding: 0;
    border: 1px solid #dcdcdc;
}

legend {
    height: 14px;
    margin-left: 6px;
    padding: 0 5px;
    line-height: 14px;
}

.options {
    display: grid;
    align-items: center;
    height: 24px;
    padding-left: 47px;
}

.unit {
    grid-template-columns: 77px 99px 1fr;
}

.grid {
    grid-template-columns: 98px 81px 35px 85px;
}

.diagram {
    grid-template-columns: 138px 1fr;
}

.links {
    grid-template-columns: 183px 1fr;
}

.options label {
    display: flex;
    align-items: center;
    gap: 3px;
    white-space: nowrap;
}

.options input[type="radio"], .options input[type="checkbox"] {
    appearance: none;
    width: 13px;
    height: 13px;
    margin: 0;
    border: 1px solid #666;
    border-radius: 3px;
    background: #f6f6f6;
}

.options input[type="radio"] {
    border-radius: 50%;
}

.options input[type="radio"]:checked {
    border: 4px solid #005fb8;
    background: #fff;
}

.options input[type="checkbox"]:checked {
    display: flex;
    align-items: center;
    justify-content: center;
    border-color: #005fb8;
    background: #005fb8;
}

.options input[type="checkbox"]:checked::before {
    content: "";
    width: 6px;
    height: 3px;
    margin-bottom: 2px;
    border: solid #fff;
    border-width: 0 0 1px 1px;
    transform: rotate(-45deg);
}

.options input[type="text"] {
    width: 100%;
    height: 18px;
    padding: 0 3px;
    border: 1px solid #fafafa;
    background: #f0f0f0;
    color: #888;
    font-family: "Noto Sans", sans-serif;
    font-size: 11px;
}

.default-row {
    display: flex;
    gap: 8px;
    margin-top: 57px;
}

.btn {
    width: 73px;
    height: 21px;
    border: 1px solid #d0d0d0;
    border-bottom-color: #b8b8b8;
    border-radius: 4px;
    background: #fdfdfd;
}

.btn.primary {
    border-color: #0078d7;
}

.dialog-foot {
    display: flex;
    gap: 9px;
    padding: 10px 8px 11px 9px;
}

.apply {
    margin-right: auto;
}

/* red note over the dialog */
.arrow {
    position: absolute;
    left: 102px;
    top: 277px;
    width: 148px;
    height: 74px;
}

.annotation {
    position: absolute;
    left: 21px;
    top: 346px;
    font-family: "Noto Sans CJK SC", sans-serif;
    font-size: 21px;
    line-height: 30px;
    color: #ed1c24;
    white-space: nowrap;
}
```
